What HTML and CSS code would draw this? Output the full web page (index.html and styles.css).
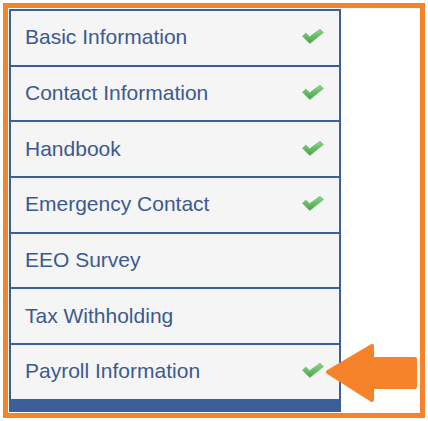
FILE: index.html
```html
<!DOCTYPE html>
<html>
<head>
<meta charset="utf-8">
<link rel="stylesheet" href="styles.css">
</head>
<body>
<div class="frame">
  <div class="panel">
    <div class="row"><span class="label">Basic Information</span><svg class="check" viewBox="0 0 22 15" width="22" height="15"><use href="#chk"/></svg></div>
    <div class="row"><span class="label">Contact Information</span><svg class="check" viewBox="0 0 22 15" width="22" height="15"><use href="#chk"/></svg></div>
    <div class="row"><span class="label">Handbook</span><svg class="check" viewBox="0 0 22 15" width="22" height="15"><use href="#chk"/></svg></div>
    <div class="row"><span class="label">Emergency Contact</span><svg class="check" viewBox="0 0 22 15" width="22" height="15"><use href="#chk"/></svg></div>
    <div class="row"><span class="label">EEO Survey</span></div>
    <div class="row"><span class="label">Tax Withholding</span></div>
    <div class="row"><span class="label">Payroll Information</span><svg class="check" viewBox="0 0 22 15" width="22" height="15"><use href="#chk"/></svg></div>
    <div class="bar"></div>
  </div>
  <svg class="arrow" viewBox="0 0 100 66" width="100" height="66">
    <polygon points="6,32 50,6 50,19 93,19 93,47 50,47 50,60" fill="#f6822a" stroke="#f6822a" stroke-width="4" stroke-linejoin="round"/>
  </svg>
</div>
<svg width="0" height="0" class="defs">
  <defs>
    <linearGradient id="g" x1="0" y1="0" x2="0" y2="1">
      <stop offset="0" stop-color="#8bd48b"/>
      <stop offset="1" stop-color="#45a445"/>
    </linearGradient>
    <g id="chk">
      <polygon points="0.5,7.2 3.8,4 7.6,7.7 18,0.3 21.5,3.4 7.8,14.6" fill="url(#g)" stroke="#5cb85c" stroke-width="0.6" stroke-linejoin="round"/>
    </g>
  </defs>
</svg>
</body>
</html>
```

FILE: styles.css
```css
html, body {
  margin: 0;
  padding: 0;
  background: #ffffff;
}
.frame {
  position: relative;
  margin: 3px 0 0 3px;
  width: 411px;
  height: 404px;
  border: 5px solid #f6822a;
  padding: 1px 0 0 1px;
  box-sizing: content-box;
  background: #ffffff;
}
.panel {
  width: 328px;
  height: 403px;
  border-left: 2px solid #3b5f98;
  border-right: 2px solid #3b5f98;
  background: #f5f5f5;
  display: flex;
  flex-direction: column;
}
.row {
  height: 53.67px;
  border-top: 2px solid #3b5f98;
  display: flex;
  align-items: center;
  justify-content: space-between;
  padding: 0 15px 0 14px;
  flex: none;
}
.label {
  font-family: "Liberation Sans", Arial, sans-serif;
  font-size: 21px;
  color: #3c5a8f;
  line-height: 1;
  margin-top: -2px;
}
.check {
  display: block;
  margin-top: -2px;
}
.bar {
  flex: 1;
  background: #3b5f98;
}
.arrow {
  position: absolute;
  left: 314px;
  top: 332px;
  display: block;
}
.defs {
  position: absolute;
}
```
